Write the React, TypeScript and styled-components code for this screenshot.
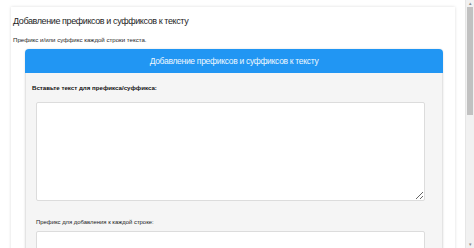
import * as React from "react";
import styled, { createGlobalStyle } from "styled-components";

const GlobalStyle = createGlobalStyle`
  html, body {
    margin: 0;
    padding: 0;
    background: #ffffff;
    overflow: hidden;
  }
  body {
    font-family: "Liberation Sans", Arial, sans-serif;
    color: #222;
  }
`;

const App: React.FC = () => {
  return (
    <>
      <GlobalStyle />
      <Page>
        <Main>
          <Sheet>
            <Title>Добавление префиксов и суффиксов к тексту</Title>
            <Lead>Префикс и/или суффикс каждой строки текста.</Lead>
            <Card>
              <CardHeader>Добавление префиксов и суффиксов к тексту</CardHeader>
              <CardBody>
                <BoldLabel>Вставьте текст для префикса/суффикса:</BoldLabel>
                <TextArea />
                <FieldLabel>Префикс для добавления к каждой строке:</FieldLabel>
                <TextInput type="text" />
              </CardBody>
            </Card>
          </Sheet>
        </Main>
        <ScrollTrack>
          <Arrow>▴</Arrow>
          <Thumb />
          <Spacer />
          <Arrow>▾</Arrow>
        </ScrollTrack>
      </Page>
    </>
  );
};

export default App;

const Page = styled.div`
  display: flex;
  flex-direction: row;
  width: 474px;
  height: 248px;
  overflow: hidden;
`;

const Main = styled.div`
  flex: 1;
  padding: 7px 10px 0 11px;
`;

const Sheet = styled.div`
  background: #ffffff;
  box-shadow: 0 0 3px rgba(0, 0, 0, 0.14);
  padding: 7px 12px 20px 14px;
  height: 260px;
`;

const Title = styled.h1`
  margin: 0 0 0 -12px;
  font-size: 9px;
  letter-spacing: -0.4px;
  font-weight: 400;
  line-height: 14px;
  color: #1e1e1e;
`;

const Lead = styled.p`
  margin: 8px 0 0 -12px;
  font-size: 6.1px;
  line-height: 8px;
  color: #1e1e1e;
`;

const Card = styled.div`
  margin-top: 5px;
  border-radius: 4px 4px 0 0;
  box-shadow: 0 0 2px rgba(0, 0, 0, 0.15);
`;

const CardHeader = styled.div`
  height: 24px;
  display: flex;
  align-items: center;
  justify-content: center;
  background: #2196f3;
  color: #eef6fe;
  border-radius: 4px 4px 0 0;
  font-size: 8.5px;
  letter-spacing: -0.3px;
`;

const CardBody = styled.div`
  background: #f5f5f5;
  border-left: 1px solid #e4e4e4;
  border-right: 1px solid #e4e4e4;
  padding: 11px 17px 20px 10px;
  display: flex;
  flex-direction: column;
`;

const BoldLabel = styled.label`
  font-size: 6.15px;
  font-weight: 700;
  line-height: 8px;
  color: #111;
  margin-left: -4px;
`;

const TextArea = styled.textarea`
  margin: 10px 0 0 0;
  height: 99px;
  box-sizing: border-box;
  border: 1px solid #dcdcdc;
  border-radius: 2px;
  background: #ffffff;
  resize: vertical;
`;

const FieldLabel = styled.label`
  margin-top: 17px;
  font-size: 5.9px;
  line-height: 8px;
  color: #222;
`;

const TextInput = styled.input`
  margin-top: 5px;
  height: 24px;
  box-sizing: border-box;
  border: 1px solid #dcdcdc;
  border-radius: 2px;
  background: #ffffff;
`;

const ScrollTrack = styled.div`
  width: 8px;
  background: #f1f1f1;
  border-left: 1px solid #e6e6e6;
  display: flex;
  flex-direction: column;
  align-items: center;
`;

const Thumb = styled.div`
  width: 6px;
  height: 108px;
  background: #c1c1c1;
`;

const Spacer = styled.div`
  flex: 1;
`;

const Arrow = styled.div`
  font-size: 5px;
  line-height: 7px;
  color: #888;
`;
